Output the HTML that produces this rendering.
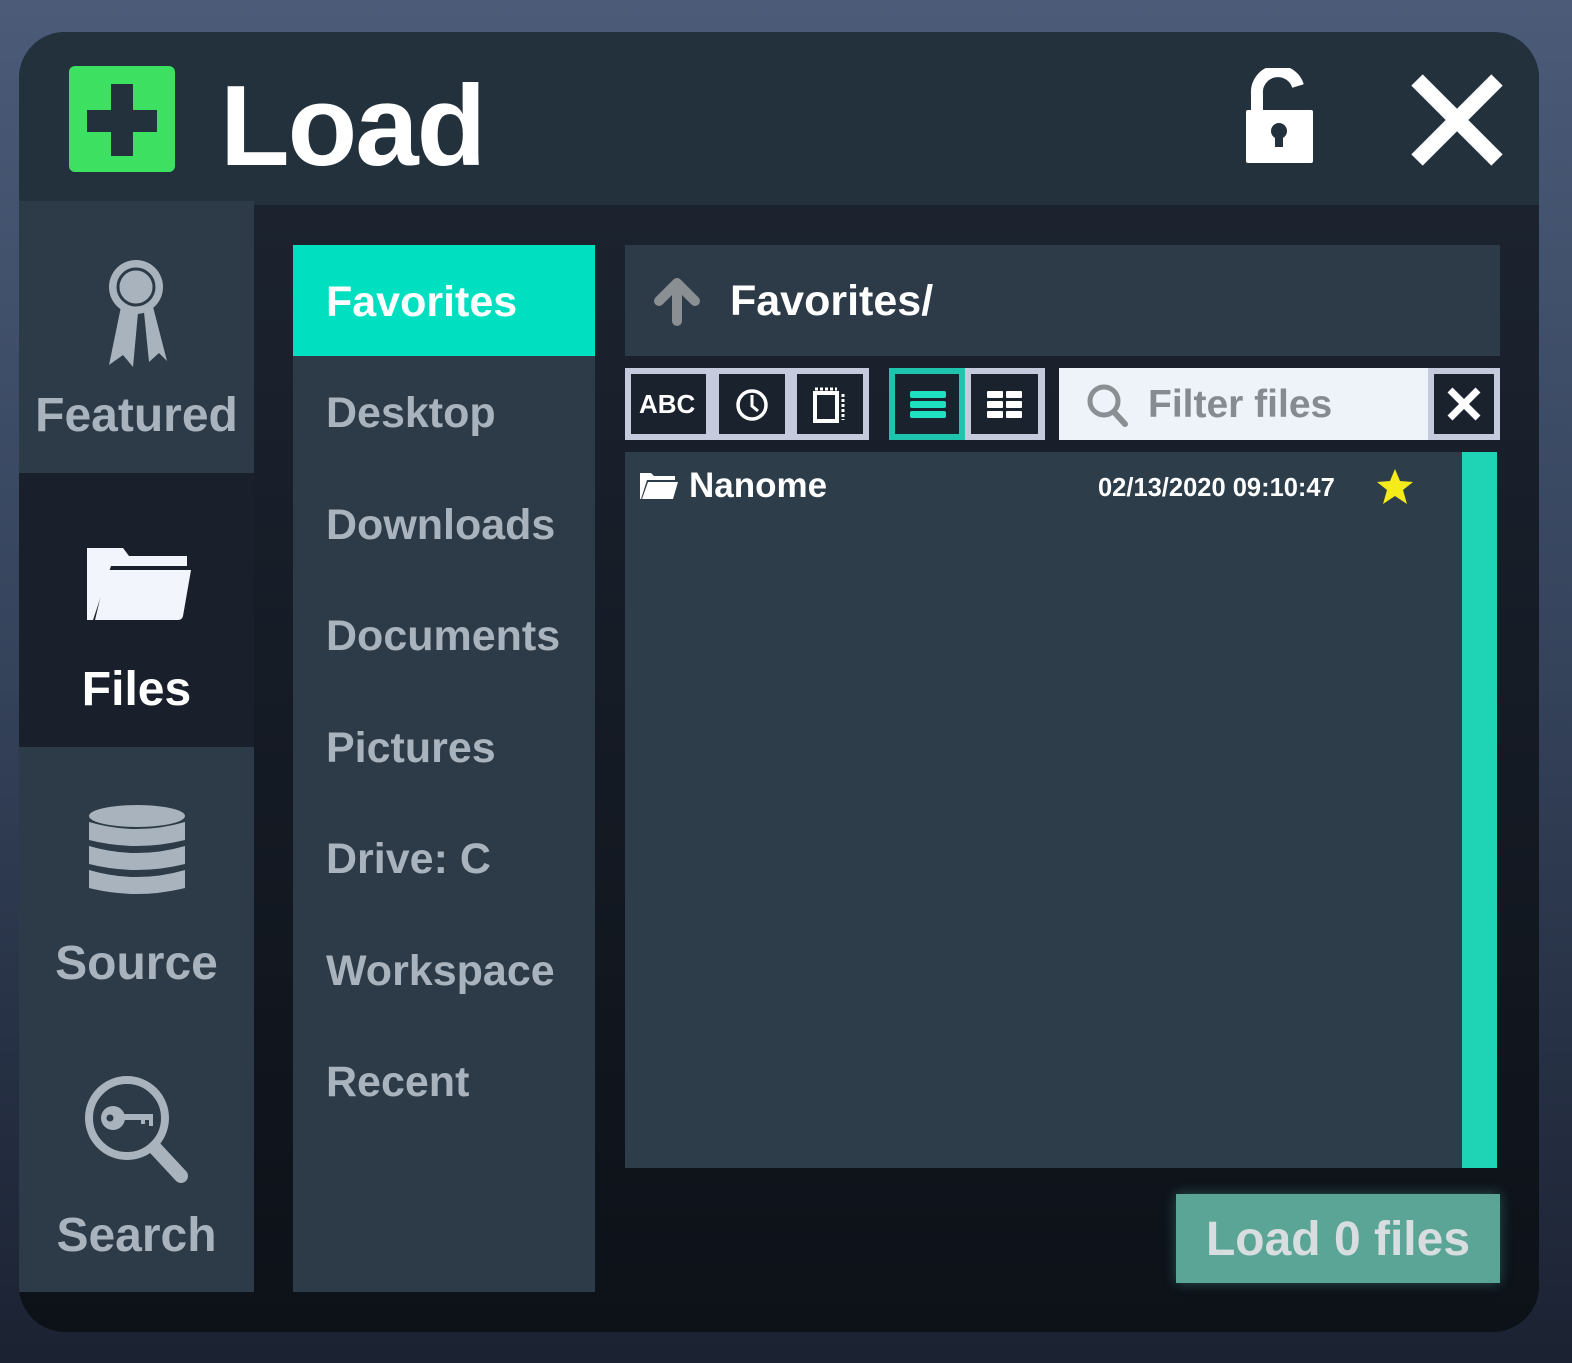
<!DOCTYPE html>
<html><head><meta charset="utf-8"><style>
*{margin:0;padding:0;box-sizing:border-box}
body{width:1572px;height:1363px;overflow:hidden;background:linear-gradient(#4b5b78 0%,#34425a 50%,#1b2232 100%);font-family:"Liberation Sans",sans-serif;position:relative}
.a{position:absolute}
.panel{left:19px;top:32px;width:1520px;height:1300px;border-radius:46px;background:linear-gradient(#1e2633,#0d1118);overflow:hidden}
.hdr{left:0;top:0;width:1520px;height:173px;background:#22313c}
.t{position:absolute;white-space:nowrap;font-weight:bold}
.nav{color:#a9b3bd;font-size:43px;left:33px}
.side{color:#a9b3bd;font-size:48px;width:235px;text-align:center;left:0}
.btn{position:absolute;background:#1a222d}
</style></head><body>
<div class="a panel">
 <div class="a hdr"></div>
 <div class="a" style="left:50px;top:34px;width:106px;height:106px;background:#3ee061;border-radius:6px"></div>
 <div class="a" style="left:68px;top:78px;width:70px;height:22px;background:#22313c"></div>
 <div class="a" style="left:92px;top:52px;width:22px;height:72px;background:#22313c"></div>
 <div class="t" style="left:201px;top:30px;font-size:114px;color:#fff;line-height:130px;letter-spacing:-2px">Load</div>
 <svg class="a" style="left:1222px;top:36px" width="80" height="100" viewBox="0 0 80 100">
  <path d="M16 44 V26 A21 21 0 0 1 57 18" fill="none" stroke="#fff" stroke-width="12"/>
  <rect x="5" y="42" width="67" height="53" rx="2" fill="#fff"/>
  <circle cx="38" cy="63" r="8" fill="#22313c"/><rect x="34" y="65" width="8" height="14" fill="#22313c"/>
 </svg>
 <svg class="a" style="left:1388px;top:40px" width="100" height="100" viewBox="0 0 100 100">
  <path d="M10 8 L90 88 M90 8 L10 88" stroke="#fff" stroke-width="16"/>
 </svg>

 <div class="a" style="left:0;top:169px;width:235px;height:272px;background:#2c3b47"></div>
 <div class="a" style="left:0;top:441px;width:235px;height:274px;background:#1a202b"></div>
 <div class="a" style="left:0;top:715px;width:235px;height:545px;background:#2c3b47"></div>
 <svg class="a" style="left:82px;top:225px" width="70" height="110" viewBox="0 0 70 110">
  <path d="M22 40 L8 108 L22 98 L32 110 L38 45 Z M42 45 L48 105 L58 96 L66 104 L50 42 Z" fill="#a9b3bd"/>
  <circle cx="35" cy="30" r="27" fill="#a9b3bd"/>
  <circle cx="35" cy="30" r="18" fill="none" stroke="#2c3b47" stroke-width="3"/>
 </svg>
 <div class="t side" style="top:356px">Featured</div>
 <svg class="a" style="left:66px;top:514px" width="110" height="80" viewBox="0 0 110 80">
  <path d="M2 2 H38 L44 10 H102 V20 H26 L8 74 H2 Z" fill="#f2f6fc"/>
  <path d="M22 24 H106 L98 70 Q97 74 93 74 H10 Z" fill="#f2f6fc"/>
 </svg>
 <div class="t side" style="top:630px;color:#fff">Files</div>
 <svg class="a" style="left:68px;top:772px" width="100" height="95" viewBox="0 0 100 95">
  <ellipse cx="50" cy="12" rx="48" ry="11" fill="#a9b3bd"/>
  <path d="M2 18 Q50 32 98 18 V36 Q50 48 2 36 Z M2 42 Q50 56 98 42 V60 Q50 72 2 60 Z M2 66 Q50 80 98 66 V84 Q50 96 2 84 Z" fill="#a9b3bd"/>
 </svg>
 <div class="t side" style="top:904px">Source</div>
 <svg class="a" style="left:64px;top:1044px" width="110" height="110" viewBox="0 0 110 110">
  <circle cx="44" cy="42" r="38" fill="none" stroke="#a9b3bd" stroke-width="8"/>
  <path d="M72 72 L98 100" stroke="#a9b3bd" stroke-width="14" stroke-linecap="round"/>
  <circle cx="30" cy="42" r="12" fill="#a9b3bd"/><circle cx="27" cy="42" r="3.5" fill="#2c3b47"/>
  <path d="M38 38 H70 V50 H66 V44 H62 V48 H58 V44 H38 Z" fill="#a9b3bd"/>
 </svg>
 <div class="t side" style="top:1176px">Search</div>

 <div class="a" style="left:274px;top:213px;width:302px;height:1047px;background:#2c3b47">
  <div class="a" style="left:0;top:0;width:302px;height:111px;background:#00e0c0"></div>
  <div class="t nav" style="top:33px;color:#fff">Favorites</div>
  <div class="t nav" style="top:144px">Desktop</div>
  <div class="t nav" style="top:256px">Downloads</div>
  <div class="t nav" style="top:367px">Documents</div>
  <div class="t nav" style="top:479px">Pictures</div>
  <div class="t nav" style="top:590px">Drive: C</div>
  <div class="t nav" style="top:702px">Workspace</div>
  <div class="t nav" style="top:813px">Recent</div>
 </div>

 <div class="a" style="left:606px;top:213px;width:875px;height:111px;background:#2c3b47"></div>
 <svg class="a" style="left:632px;top:243px" width="52" height="52" viewBox="0 0 52 52">
  <path d="M26 46 V10 M8 26 L26 8 L44 26" fill="none" stroke="#8a8f94" stroke-width="10" stroke-linecap="round" stroke-linejoin="round"/>
 </svg>
 <div class="t" style="left:711px;top:245px;font-size:43px;color:#fff">Favorites/</div>

 <div class="a" style="left:606px;top:336px;width:244px;height:72px;background:#c5cbdc"></div>
 <div class="btn" style="left:612px;top:342px;width:75px;height:60px"></div>
 <div class="t" style="left:620px;top:357px;font-size:26px;color:#fff">ABC</div>
 <div class="btn" style="left:700px;top:342px;width:66px;height:60px"></div>
 <svg class="a" style="left:715px;top:355px" width="36" height="36" viewBox="0 0 36 36"><circle cx="18" cy="18" r="14" fill="none" stroke="#fff" stroke-width="3.5"/><path d="M18 8 V19 L24 24" fill="none" stroke="#fff" stroke-width="3"/></svg>
 <div class="btn" style="left:778px;top:342px;width:66px;height:60px"></div>
 <svg class="a" style="left:793px;top:354px" width="36" height="38" viewBox="0 0 36 38"><rect x="3" y="7" width="22" height="28" fill="none" stroke="#fff" stroke-width="4"/><path d="M3 3 H25 M31 8 V34" stroke="#fff" stroke-width="3" stroke-dasharray="3 2"/></svg>
 <div class="a" style="left:870px;top:336px;width:156px;height:72px;background:#c5cbdc"></div>
 <div class="a" style="left:870px;top:336px;width:76px;height:72px;background:#1fc4ac"></div>
 <div class="btn" style="left:876px;top:342px;width:64px;height:60px"></div>
 <div class="a" style="left:891px;top:359px;width:36px;height:7px;background:#1fe0c0;border-radius:2px;box-shadow:0 10px 0 #1fe0c0,0 20px 0 #1fe0c0"></div>
 <div class="btn" style="left:952px;top:342px;width:67px;height:60px"></div>
 <div class="a" style="left:968px;top:359px;width:16px;height:7px;background:#fff;border-radius:1px;box-shadow:0 10px 0 #fff,0 20px 0 #fff,19px 0 0 #fff,19px 10px 0 #fff,19px 20px 0 #fff"></div>
 <div class="a" style="left:1040px;top:336px;width:441px;height:72px;background:#eef3fa"></div>
 <svg class="a" style="left:1066px;top:350px" width="48" height="48" viewBox="0 0 48 48"><circle cx="19" cy="19" r="14" fill="none" stroke="#8a8f94" stroke-width="5"/><path d="M29 30 L40 42" stroke="#8a8f94" stroke-width="6" stroke-linecap="round"/></svg>
 <div class="t" style="left:1129px;top:351px;font-size:39px;color:#868b92;font-weight:bold">Filter files</div>
 <div class="a" style="left:1409px;top:336px;width:72px;height:72px;background:#c5cbdc"></div>
 <div class="btn" style="left:1415px;top:342px;width:60px;height:60px"></div>
 <svg class="a" style="left:1425px;top:352px" width="40" height="40" viewBox="0 0 40 40"><path d="M6 6 L34 34 M34 6 L6 34" stroke="#fff" stroke-width="7"/></svg>

 <div class="a" style="left:606px;top:420px;width:838px;height:716px;background:#2d3d4a"></div>
 <div class="a" style="left:1443px;top:420px;width:35px;height:716px;background:#1fd4b4"></div>
 <svg class="a" style="left:620px;top:440px" width="40" height="28" viewBox="0 0 40 28"><path d="M1 1 H12 L15 4 H36 V8 H8 L2 27 H1 Z" fill="#fff"/><path d="M9 10 H39 L34 27 H3 Z" fill="#fff"/></svg>
 <div class="t" style="left:670px;top:434px;font-size:35px;color:#fff">Nanome</div>
 <div class="t" style="left:1079px;top:442px;font-size:25.5px;color:#fff">02/13/2020 09:10:47</div>
 <svg class="a" style="left:1357px;top:436px" width="38" height="38" viewBox="0 0 38 38"><path d="M19 1 L24 13 L37 14 L27 22 L31 36 L19 28 L7 36 L11 22 L1 14 L14 13 Z" fill="#f5ea1a"/></svg>

 <div class="a" style="left:1157px;top:1162px;width:324px;height:89px;background:#5aa595;box-shadow:0 0 12px rgba(90,200,180,.35)"></div>
 <div class="t" style="left:1157px;top:1180px;width:324px;text-align:center;font-size:48px;color:#d8dde0">Load 0 files</div>
</div>
</body></html>
